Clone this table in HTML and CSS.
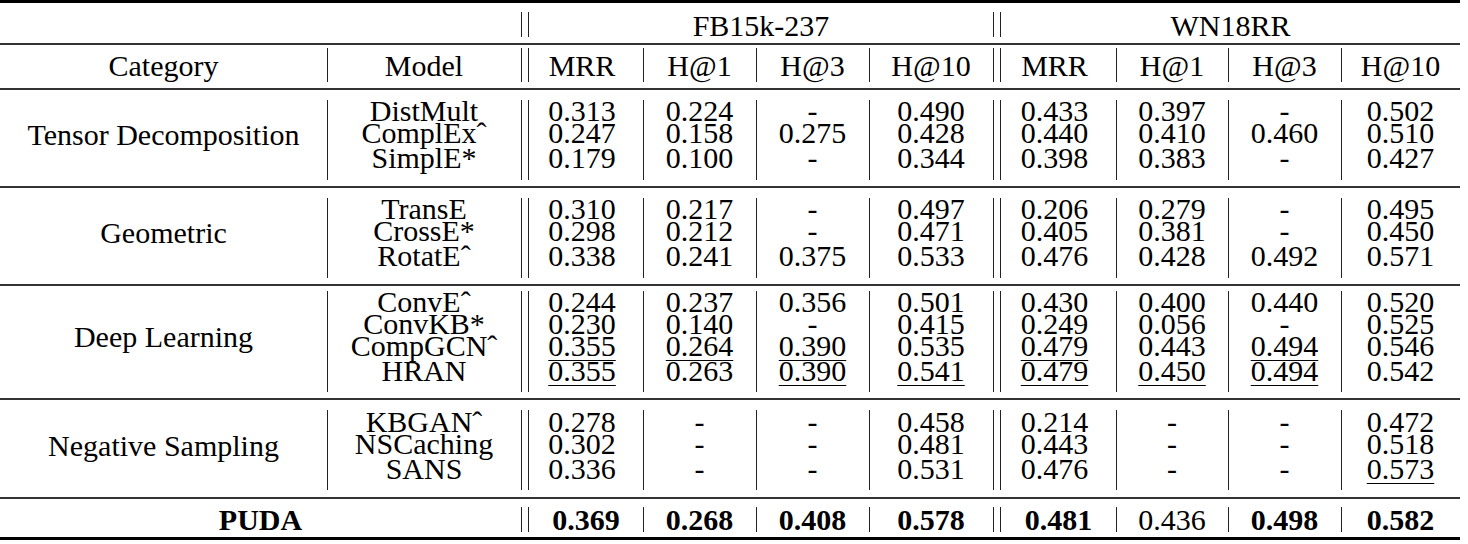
FILE: index.html
```html
<!DOCTYPE html>
<html lang="en">

<head>
    <meta charset="UTF-8">
    <title>Link prediction results</title>
    <link rel="stylesheet" href="styles.css">
</head>

<body>
    <table class="results">
        <colgroup>
            <col class="w-cat">
            <col class="w-model">
            <col class="w-mrr">
            <col class="w-h1">
            <col class="w-h3">
            <col class="w-h10">
            <col class="w-mrr2">
            <col class="w-h1b">
            <col class="w-h3b">
            <col class="w-h10b">
        </colgroup>
        <tr class="row-datasets">
            <td colspan="2"></td>
            <td colspan="4"><div class="cell dbl">FB15k-237</div></td>
            <td colspan="4"><div class="cell dbl">WN18RR</div></td>
        </tr>
        <tr class="row-metrics">
            <td><div class="cell">Category</div></td>
            <td><div class="cell bar">Model</div></td>
            <td><div class="cell dbl">MRR</div></td>
            <td><div class="cell bar">H@1</div></td>
            <td><div class="cell bar">H@3</div></td>
            <td><div class="cell bar">H@10</div></td>
            <td><div class="cell dbl">MRR</div></td>
            <td><div class="cell bar">H@1</div></td>
            <td><div class="cell bar">H@3</div></td>
            <td><div class="cell bar">H@10</div></td>
        </tr>

        <!-- Tensor Decomposition -->
        <tr class="block">
            <td><div class="cell">Tensor Decomposition</div></td>
            <td><div class="cell bar"><div>DistMult</div><div>ComplExˆ</div><div>SimplE*</div></div></td>
            <td><div class="cell dbl"><div>0.313</div><div>0.247</div><div>0.179</div></div></td>
            <td><div class="cell bar"><div>0.224</div><div>0.158</div><div>0.100</div></div></td>
            <td><div class="cell bar"><div>-</div><div>0.275</div><div>-</div></div></td>
            <td><div class="cell bar"><div>0.490</div><div>0.428</div><div>0.344</div></div></td>
            <td><div class="cell dbl"><div>0.433</div><div>0.440</div><div>0.398</div></div></td>
            <td><div class="cell bar"><div>0.397</div><div>0.410</div><div>0.383</div></div></td>
            <td><div class="cell bar"><div>-</div><div>0.460</div><div>-</div></div></td>
            <td><div class="cell bar"><div>0.502</div><div>0.510</div><div>0.427</div></div></td>
        </tr>

        <!-- Geometric -->
        <tr class="block">
            <td><div class="cell">Geometric</div></td>
            <td><div class="cell bar"><div>TransE</div><div>CrossE*</div><div>RotatEˆ</div></div></td>
            <td><div class="cell dbl"><div>0.310</div><div>0.298</div><div>0.338</div></div></td>
            <td><div class="cell bar"><div>0.217</div><div>0.212</div><div>0.241</div></div></td>
            <td><div class="cell bar"><div>-</div><div>-</div><div>0.375</div></div></td>
            <td><div class="cell bar"><div>0.497</div><div>0.471</div><div>0.533</div></div></td>
            <td><div class="cell dbl"><div>0.206</div><div>0.405</div><div>0.476</div></div></td>
            <td><div class="cell bar"><div>0.279</div><div>0.381</div><div>0.428</div></div></td>
            <td><div class="cell bar"><div>-</div><div>-</div><div>0.492</div></div></td>
            <td><div class="cell bar"><div>0.495</div><div>0.450</div><div>0.571</div></div></td>
        </tr>

        <!-- Deep Learning -->
        <tr class="block block-four">
            <td><div class="cell">Deep Learning</div></td>
            <td><div class="cell bar"><div>ConvEˆ</div><div>ConvKB*</div><div>CompGCNˆ</div><div>HRAN</div></div></td>
            <td><div class="cell dbl"><div>0.244</div><div>0.230</div><div><span class="u">0.355</span></div><div><span class="u">0.355</span></div></div></td>
            <td><div class="cell bar"><div>0.237</div><div>0.140</div><div><span class="u">0.264</span></div><div>0.263</div></div></td>
            <td><div class="cell bar"><div>0.356</div><div>-</div><div><span class="u">0.390</span></div><div><span class="u">0.390</span></div></div></td>
            <td><div class="cell bar"><div>0.501</div><div>0.415</div><div>0.535</div><div><span class="u">0.541</span></div></div></td>
            <td><div class="cell dbl"><div>0.430</div><div>0.249</div><div><span class="u">0.479</span></div><div><span class="u">0.479</span></div></div></td>
            <td><div class="cell bar"><div>0.400</div><div>0.056</div><div>0.443</div><div><span class="u">0.450</span></div></div></td>
            <td><div class="cell bar"><div>0.440</div><div>-</div><div><span class="u">0.494</span></div><div><span class="u">0.494</span></div></div></td>
            <td><div class="cell bar"><div>0.520</div><div>0.525</div><div>0.546</div><div>0.542</div></div></td>
        </tr>

        <!-- Negative Sampling -->
        <tr class="block block-last">
            <td><div class="cell">Negative Sampling</div></td>
            <td><div class="cell bar"><div>KBGANˆ</div><div>NSCaching</div><div>SANS</div></div></td>
            <td><div class="cell dbl"><div>0.278</div><div>0.302</div><div>0.336</div></div></td>
            <td><div class="cell bar"><div>-</div><div>-</div><div>-</div></div></td>
            <td><div class="cell bar"><div>-</div><div>-</div><div>-</div></div></td>
            <td><div class="cell bar"><div>0.458</div><div>0.481</div><div>0.531</div></div></td>
            <td><div class="cell dbl"><div>0.214</div><div>0.443</div><div>0.476</div></div></td>
            <td><div class="cell bar"><div>-</div><div>-</div><div>-</div></div></td>
            <td><div class="cell bar"><div>-</div><div>-</div><div>-</div></div></td>
            <td><div class="cell bar"><div>0.472</div><div>0.518</div><div><span class="u">0.573</span></div></div></td>
        </tr>

        <tr class="row-ours">
            <td colspan="2"><div class="cell"><b>PUDA</b></div></td>
            <td><div class="cell dbl"><b>0.369</b></div></td>
            <td><div class="cell bar"><b>0.268</b></div></td>
            <td><div class="cell bar"><b>0.408</b></div></td>
            <td><div class="cell bar"><b>0.578</b></div></td>
            <td><div class="cell dbl"><b>0.481</b></div></td>
            <td><div class="cell bar">0.436</div></td>
            <td><div class="cell bar"><b>0.498</b></div></td>
            <td><div class="cell bar"><b>0.582</b></div></td>
        </tr>
    </table>
</body>

</html>
```

FILE: styles.css
```css
body {
    margin: 0;
    background-color: #ffffff;
    color: #000;
    font-family: "Liberation Serif", "Times New Roman", serif;
    font-size: 30px;
}

.results {
    border-collapse: collapse;
    table-layout: fixed;
    width: 1460px;
}

.results td {
    padding: 0;
    text-align: center;
    vertical-align: middle;
    white-space: nowrap;
}

/* column widths, taken from where the rules fall */
.w-cat { width: 327px; }
.w-model { width: 194px; }
.w-mrr { width: 122px; }
.w-h1 { width: 113px; }
.w-h3 { width: 113px; }
.w-h10 { width: 124px; }
.w-mrr2 { width: 123px; }
.w-h1b { width: 112px; }
.w-h3b { width: 113px; }
.w-h10b { width: 119px; }

/* vertical rules only run along the text, booktabs style */
.bar {
    background: linear-gradient(#222, #222) 0 0 / 1px 100% no-repeat;
}

.dbl {
    padding-left: 8px;
    background:
        linear-gradient(#222, #222) 0 0 / 1px 100% no-repeat,
        linear-gradient(#222, #222) 7px 0 / 1px 100% no-repeat;
}

/* horizontal rules */
.row-datasets td {
    border-top: 3px solid #000;
    border-bottom: 2px solid #333;
    padding: 9px 0 6px;
}

.row-datasets .cell {
    line-height: 23px;
    padding-top: 2px;
}

.row-metrics td {
    border-bottom: 2px solid #333;
    padding: 3px 0 6px;
}

.row-metrics .cell {
    line-height: 30px;
    padding: 3px 0 1px;
}

.block td {
    border-bottom: 2px solid #333;
    padding: 10px 0 6px;
}

.block .cell {
    line-height: 22px;
    padding: 0 0 11px;
}

.block .cell > div:last-child {
    margin-top: 3px;
}

.block-four td {
    padding: 5px 0 6px;
}

.block-four .cell {
    padding: 0 0 10px;
}

.block-last td {
    padding: 10px 0 7px;
}

.block-last .cell {
    padding: 1px 0 10px;
}

.u {
    text-decoration: underline;
    text-decoration-thickness: 1px;
    text-underline-offset: 4px;
}

.row-ours td {
    border-bottom: 3px solid #000;
    padding: 8px 0 5px;
}

.row-ours .cell {
    line-height: 25px;
}
```
